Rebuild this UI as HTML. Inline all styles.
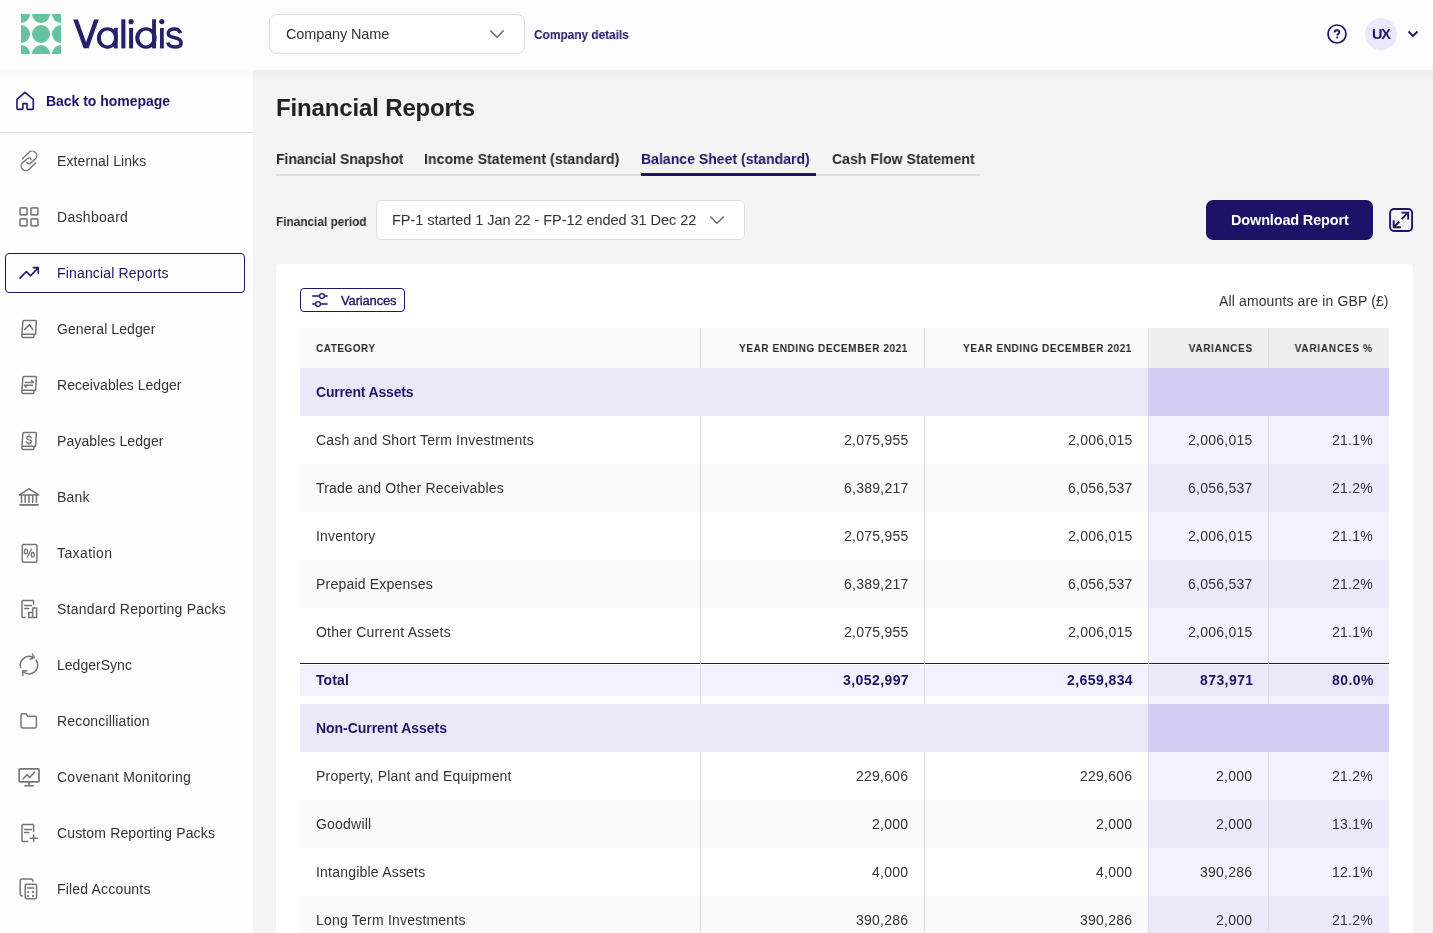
<!DOCTYPE html>
<html><head><meta charset="utf-8"><title>Financial Reports</title>
<style>
html,body{margin:0;padding:0;}
body{width:1433px;height:933px;position:relative;overflow:hidden;background:#f4f4f4;font-family:"Liberation Sans",sans-serif;}
.t{position:absolute;white-space:nowrap;will-change:transform;}
svg{display:block}
</style></head><body>
<div style="position:absolute;left:0;top:0;width:1433px;height:70px;background:#fcfcfc"></div>
<div style="position:absolute;left:0;top:70px;width:253px;height:863px;background:#fefefe"></div>
<div style="position:absolute;left:253px;top:70px;width:1180px;height:863px;background:#f4f4f4"></div>
<div style="position:absolute;left:0;top:70px;width:1433px;height:12px;background:linear-gradient(rgba(0,0,0,0.022),rgba(0,0,0,0))"></div>
<svg style="position:absolute;left:0;top:0" width="80" height="70"><defs><clipPath id="lc"><rect x="21" y="14" width="40" height="40"/></clipPath></defs><g clip-path="url(#lc)" fill="#66c3a2"><circle cx="21" cy="14" r="9"/><circle cx="21" cy="34" r="9"/><circle cx="21" cy="54" r="9"/><circle cx="41" cy="14" r="9"/><circle cx="41" cy="34" r="9"/><circle cx="41" cy="54" r="9"/><circle cx="61" cy="14" r="9"/><circle cx="61" cy="34" r="9"/><circle cx="61" cy="54" r="9"/></g></svg>
<svg style="position:absolute;left:0;top:0" width="200" height="70"><g fill="#27216b"><path d="M73.2 19.4 H77.9 L86.1 42.2 L94.1 19.4 H98.8 L88.6 48.3 H83.6 Z"/><path fill-rule="evenodd" d="M96.90 37.98 A10.55 10.8 0 1 0 118.00 37.98 A10.55 10.8 0 1 0 96.90 37.98 Z M100.90 37.9 A6.55 7.5 0 1 0 114.00 37.9 A6.55 7.5 0 1 0 100.90 37.9 Z"/><rect x="114" y="27.9" width="3.7" height="20.5"/><rect x="121.3" y="19.3" width="4.1" height="29.1"/><circle cx="131.1" cy="21.7" r="2.65"/><rect x="129.1" y="27.9" width="4" height="20.5"/><path fill-rule="evenodd" d="M135.30 37.98 A10.7 10.8 0 1 0 156.70 37.98 A10.7 10.8 0 1 0 135.30 37.98 Z M139.40 37.9 A6.6 7.5 0 1 0 152.60 37.9 A6.6 7.5 0 1 0 139.40 37.9 Z"/><rect x="152.1" y="19.3" width="3.9" height="29.1"/><circle cx="161.8" cy="21.6" r="2.6"/><rect x="160" y="28" width="3.8" height="20.4"/></g><path d="M180.6 33.2 C179.6 30.6 177.4 29.1 174.4 29.1 C171 29.1 168.3 30.8 168.3 33.4 C168.3 36.2 171.4 37 174.8 37.7 C178.5 38.5 181.1 39.7 181.1 42.9 C181.1 45.6 178.4 47 174.6 47 C170.9 47 168.6 45.3 167.7 42.5" fill="none" stroke="#27216b" stroke-width="3.5"/></svg>
<div style="position:absolute;left:269px;top:14px;width:254px;height:37.5px;border:1px solid #dedede;border-radius:8px;background:#fff"></div>
<div class="t" style="top:24.56px;font-size:14.5px;line-height:19px;color:#333333;letter-spacing:-0.133px;left:285.50px;">Company Name</div>
<svg style="position:absolute;left:486px;top:26px" width="22" height="16"><path d="M4.3 4.5 L11 11.3 L17.7 4.5" fill="none" stroke="#666" stroke-width="1.5"/></svg>
<div class="t" style="top:26.23px;font-size:13px;line-height:17px;color:#1f1566;font-weight:bold;letter-spacing:-0.070px;left:533.60px;transform:scaleX(0.92);transform-origin:left center;">Company details</div>
<svg style="position:absolute;left:1325px;top:22px" width="24" height="24"><circle cx="12" cy="12" r="9" fill="none" stroke="#1f1566" stroke-width="1.7"/><path d="M9.7 10.5 C9.7 9 10.7 8.2 12 8.2 C13.4 8.2 14.3 9.1 14.3 10.3 C14.3 11.9 12.2 12 12.2 13.6" fill="none" stroke="#1f1566" stroke-width="1.9"/><circle cx="12.2" cy="15.5" r="1.05" fill="#1f1566"/></svg>
<div style="position:absolute;left:1365px;top:18px;width:32px;height:32px;border-radius:50%;background:#ebe8fa"></div>
<div class="t" style="top:24.76px;font-size:14.5px;line-height:19px;color:#1f1566;font-weight:bold;letter-spacing:-1.142px;left:1371.50px;">UX</div>
<svg style="position:absolute;left:1404px;top:26px" width="18" height="16"><path d="M4.5 5.5 L9 10 L13.5 5.5" fill="none" stroke="#1f1566" stroke-width="1.8"/></svg>
<svg style="position:absolute;left:0;top:80px" width="45" height="40"><path d="M17 19.4 L25 12.3 L33.3 19.4 V28.4 Q33.3 29.4 32.3 29.4 H28 Q27 29.4 27 28.4 V23.6 H22.9 V28.4 Q22.9 29.4 21.9 29.4 H18 Q17 29.4 17 28.4 Z" fill="none" stroke="#1f1566" stroke-width="1.6" stroke-linejoin="round" transform="translate(0,0)"/></svg>
<div class="t" style="top:92.45px;font-size:14px;line-height:18px;color:#1f1566;font-weight:bold;letter-spacing:-0.032px;left:46.00px;">Back to homepage</div>
<div style="position:absolute;left:0;top:132px;width:253px;height:1px;background:#dddddd"></div>
<div style="position:absolute;left:5px;top:253px;width:238px;height:38px;border:1px solid #1f1566;border-radius:4px"></div>
<div class="t" style="top:152.25px;font-size:14px;line-height:18px;color:#333333;letter-spacing:0.098px;left:57.40px;">External Links</div>
<div class="t" style="top:208.25px;font-size:14px;line-height:18px;color:#333333;letter-spacing:0.301px;left:57.40px;">Dashboard</div>
<div class="t" style="top:264.25px;font-size:14px;line-height:18px;color:#1f1566;letter-spacing:0.167px;left:57.40px;">Financial Reports</div>
<div class="t" style="top:320.25px;font-size:14px;line-height:18px;color:#333333;letter-spacing:0.078px;left:57.40px;">General Ledger</div>
<div class="t" style="top:376.25px;font-size:14px;line-height:18px;color:#333333;letter-spacing:0.045px;left:57.40px;">Receivables Ledger</div>
<div class="t" style="top:432.25px;font-size:14px;line-height:18px;color:#333333;letter-spacing:0.102px;left:57.40px;">Payables Ledger</div>
<div class="t" style="top:488.25px;font-size:14px;line-height:18px;color:#333333;letter-spacing:0.197px;left:57.40px;">Bank</div>
<div class="t" style="top:544.25px;font-size:14px;line-height:18px;color:#333333;letter-spacing:0.408px;left:57.40px;">Taxation</div>
<div class="t" style="top:600.25px;font-size:14px;line-height:18px;color:#333333;letter-spacing:0.234px;left:57.40px;">Standard Reporting Packs</div>
<div class="t" style="top:656.25px;font-size:14px;line-height:18px;color:#333333;letter-spacing:0.020px;left:57.40px;">LedgerSync</div>
<div class="t" style="top:712.25px;font-size:14px;line-height:18px;color:#333333;letter-spacing:0.160px;left:57.40px;">Reconcilliation</div>
<div class="t" style="top:768.25px;font-size:14px;line-height:18px;color:#333333;letter-spacing:0.262px;left:57.40px;">Covenant Monitoring</div>
<div class="t" style="top:824.25px;font-size:14px;line-height:18px;color:#333333;letter-spacing:0.146px;left:57.40px;">Custom Reporting Packs</div>
<div class="t" style="top:880.25px;font-size:14px;line-height:18px;color:#333333;letter-spacing:0.181px;left:57.40px;">Filed Accounts</div>
<svg style="position:absolute;left:15px;top:146px" width="28" height="30" fill="none" stroke="#767676" stroke-width="1.4" stroke-linecap="round" stroke-linejoin="round"><path d="M7.36 12.73 L14.05 6.35 A4.6 4.6 0 0 1 20.55 12.85 L15.4 17.2 A2.05 2.05 0 0 1 11.85 16.2"/><g transform="rotate(180 13.98 14.87)"><path d="M7.36 12.73 L14.05 6.35 A4.6 4.6 0 0 1 20.55 12.85 L15.4 17.2 A2.05 2.05 0 0 1 11.85 16.2"/></g></svg>
<svg style="position:absolute;left:15px;top:202px" width="28" height="30" fill="none" stroke="#808080" stroke-width="1.7" stroke-linecap="round" stroke-linejoin="round"><rect x="5.05" y="5.95" width="7" height="6.9" rx="0.8"/><rect x="15.95" y="5.95" width="7" height="6.9" rx="0.8"/><rect x="5.05" y="16.95" width="7" height="6.9" rx="0.8"/><rect x="15.95" y="16.95" width="7" height="6.9" rx="0.8"/></svg>
<svg style="position:absolute;left:15px;top:258px" width="28" height="30" fill="none" stroke="#1f1566" stroke-width="1.6" stroke-linecap="round" stroke-linejoin="round"><path d="M5.1 20.1 L11.4 13.5 L15.6 17.8 L23.3 9.6 M18.3 9.6 H23.3 V15.3"/></svg>
<svg style="position:absolute;left:15px;top:314px" width="28" height="30" fill="none" stroke="#767676" stroke-width="1.5" stroke-linecap="round" stroke-linejoin="round"><path d="M9 6.4 H20.4 Q21.4 6.4 21.3 7.4 L20.6 20.3 H6.9 L7.9 7.4 Q8 6.4 9 6.4 Z M6.9 20.3 V22.5 Q6.9 23.5 7.9 23.5 H18.6 L19 20.3"/><path d="M9.6 15.4 L14.6 10.6 L17.8 15.6"/></svg>
<svg style="position:absolute;left:15px;top:370px" width="28" height="30" fill="none" stroke="#767676" stroke-width="1.5" stroke-linecap="round" stroke-linejoin="round"><path d="M9 6.4 H20.4 Q21.4 6.4 21.3 7.4 L20.6 20.3 H6.9 L7.9 7.4 Q8 6.4 9 6.4 Z M6.9 20.3 V22.5 Q6.9 23.5 7.9 23.5 H18.6 L19 20.3"/><path d="M10.3 12.4 H18.6 L16.4 10.4 M17.5 15.3 H9.3 L11.4 17.2"/></svg>
<svg style="position:absolute;left:15px;top:426px" width="28" height="30" fill="none" stroke="#767676" stroke-width="1.5" stroke-linecap="round" stroke-linejoin="round"><path d="M9 6.4 H20.4 Q21.4 6.4 21.3 7.4 L20.6 20.3 H6.9 L7.9 7.4 Q8 6.4 9 6.4 Z M6.9 20.3 V22.5 Q6.9 23.5 7.9 23.5 H18.6 L19 20.3"/><path d="M16.5 11.7 C16.1 10.9 15.2 10.5 14.1 10.5 C12.6 10.5 11.7 11.2 11.7 12.2 C11.7 13.4 12.9 13.7 14.1 13.9 C15.5 14.1 16.5 14.6 16.5 15.7 C16.5 16.7 15.5 17.2 14 17.2 C12.7 17.2 11.8 16.8 11.4 16 M14.1 9.3 V10.5 M14 17.2 V18.3" stroke-width="1.4"/></svg>
<svg style="position:absolute;left:15px;top:482px" width="28" height="30" fill="none" stroke="#767676" stroke-width="1.5" stroke-linecap="round" stroke-linejoin="round"><path d="M4.3 12.9 L14 6.8 L23.7 12.9 Z M6.5 13 V20.4 M10.2 13 V20.4 M14 13 V20.4 M17.7 13 V20.4 M21.4 13 V20.4"/><path d="M4.3 22.9 H23.7" stroke-width="1.8" stroke-linecap="butt"/></svg>
<svg style="position:absolute;left:15px;top:538px" width="28" height="30" fill="none" stroke="#767676" stroke-width="1.5" stroke-linecap="round" stroke-linejoin="round"><rect x="7.3" y="6.5" width="14.6" height="17.7" rx="1.2"/><ellipse cx="10.9" cy="13.4" rx="1.55" ry="2.3" stroke-width="1.3"/><ellipse cx="17.75" cy="16.8" rx="1.55" ry="2.3" stroke-width="1.3"/><path d="M16.4 11.1 L12.3 19.1" stroke-width="1.3"/></svg>
<svg style="position:absolute;left:15px;top:594px" width="28" height="30" fill="none" stroke="#767676" stroke-width="1.5" stroke-linecap="round" stroke-linejoin="round"><path d="M18.6 10.3 V7.6 Q18.6 6.6 17.6 6.6 H8 Q7 6.6 7 7.6 V22.4 Q7 23.4 8 23.4 H10.3 M9.6 11.5 H16.4 M9.6 14.5 H13.7"/><path d="M13.8 18.4 H17.6 V23.4 H13.8 Z M17.6 14 H21.6 V23.4 H17.6 Z"/></svg>
<svg style="position:absolute;left:15px;top:650px" width="28" height="30" fill="none" stroke="#767676" stroke-width="1.5" stroke-linecap="round" stroke-linejoin="round"><path d="M5.64 17.5 A8.7 8.7 0 0 1 18.3 7.6 M17.4 4.1 L19.2 7.5 L15.2 9.2 M21.21 10.24 A8.7 8.7 0 0 1 8.4 21.8 M11.9 20.7 L7.6 21 L7.8 25.5"/></svg>
<svg style="position:absolute;left:15px;top:706px" width="28" height="30" fill="none" stroke="#767676" stroke-width="1.5" stroke-linecap="round" stroke-linejoin="round"><path d="M7.5 7.8 H11 L12.7 10.2 H20 Q21.4 10.2 21.4 11.6 V20.5 Q21.4 21.9 20 21.9 H7.4 Q6 21.9 6 20.5 V9.3 Q6 7.8 7.5 7.8 Z"/></svg>
<svg style="position:absolute;left:15px;top:762px" width="28" height="30" fill="none" stroke="#767676" stroke-width="1.5" stroke-linecap="round" stroke-linejoin="round"><rect x="4.2" y="6.8" width="19.8" height="13" rx="0.8" stroke-width="1.7"/><path d="M8.2 16.6 L12.2 12.6 L14.6 15.4 L19.7 10.1"/><path d="M14 20.6 V23.6 M9.4 23.8 H18.8" stroke-width="1.6" stroke-linecap="butt"/></svg>
<svg style="position:absolute;left:15px;top:818px" width="28" height="30" fill="none" stroke="#767676" stroke-width="1.5" stroke-linecap="round" stroke-linejoin="round"><path d="M18.6 13.2 V7.6 Q18.6 6.6 17.6 6.6 H8 Q7 6.6 7 7.6 V22.4 Q7 23.4 8 23.4 H12.7 M9.6 11.5 H16.4 M9.6 14.5 H13.7 M18.7 17 V23.6 M15.2 20.3 H22.5"/></svg>
<svg style="position:absolute;left:15px;top:874px" width="28" height="30" fill="none" stroke="#767676" stroke-width="1.5" stroke-linecap="round" stroke-linejoin="round"><path d="M18 7.2 Q18 4.9 15.8 4.9 H7.3 Q5.2 4.9 5.2 7 V19.8 Q5.2 22 7.3 22"/><rect x="10.2" y="10.2" width="11.4" height="14.6" rx="1.5"/><path d="M12.7 14 H18.6" stroke-width="1.7"/><path d="M12.9 18 h0.4 M17.8 18 h0.4 M12.9 22 h0.4 M17.8 22 h0.4" stroke-width="1.8"/></svg>
<div class="t" style="top:91.53px;font-size:24px;line-height:31px;color:#222;font-weight:bold;letter-spacing:-0.148px;left:276.40px;">Financial Reports</div>
<div style="position:absolute;left:276px;top:174px;width:704px;height:2px;background:#dcdcdc"></div>
<div style="position:absolute;left:641px;top:173px;width:175px;height:3px;background:#1f1566"></div>
<div class="t" style="top:148.77px;font-size:15px;line-height:20px;color:#2a2a2a;font-weight:bold;letter-spacing:-0.091px;left:276.40px;transform:scaleX(0.937);transform-origin:left center;">Financial Snapshot</div>
<div class="t" style="top:148.77px;font-size:15px;line-height:20px;color:#2a2a2a;font-weight:bold;letter-spacing:0.071px;left:424.00px;transform:scaleX(0.937);transform-origin:left center;">Income Statement (standard)</div>
<div class="t" style="top:148.77px;font-size:15px;line-height:20px;color:#1f1566;font-weight:bold;left:641.20px;transform:scaleX(0.937);transform-origin:left center;">Balance Sheet (standard)</div>
<div class="t" style="top:148.77px;font-size:15px;line-height:20px;color:#2a2a2a;font-weight:bold;letter-spacing:0.034px;left:832.10px;transform:scaleX(0.937);transform-origin:left center;">Cash Flow Statement</div>
<div class="t" style="top:212.63px;font-size:13px;line-height:17px;color:#2a2a2a;font-weight:bold;letter-spacing:-0.008px;left:276.40px;transform:scaleX(0.91);transform-origin:left center;">Financial period</div>
<div style="position:absolute;left:376px;top:200px;width:367px;height:38px;border:1px solid #dedede;border-radius:6px;background:#fff"></div>
<div class="t" style="top:210.76px;font-size:14.5px;line-height:19px;color:#333333;letter-spacing:-0.045px;left:391.90px;">FP-1 started 1 Jan 22 - FP-12 ended 31 Dec 22</div>
<svg style="position:absolute;left:706px;top:212px" width="22" height="16"><path d="M4.3 4.5 L11 11.3 L17.7 4.5" fill="none" stroke="#6a6a6a" stroke-width="1.4"/></svg>
<div style="position:absolute;left:1206px;top:200px;width:167px;height:40px;border-radius:7px;background:#1d1266"></div>
<div class="t" style="top:210.76px;font-size:14.5px;line-height:19px;color:#fff;font-weight:bold;letter-spacing:-0.159px;left:1230.80px;">Download Report</div>
<svg style="position:absolute;left:1385px;top:204px" width="32" height="32" fill="none" stroke="#1f1566" stroke-width="1.9"><rect x="5.1" y="5" width="22" height="22" rx="4"/><path d="M16.7 15.1 L22 9.7 M16.5 8.6 H23.2 V15.5 M14.3 17.7 L9.8 22 M8.7 16.2 V23.2 H15.8"/></svg>
<div style="position:absolute;left:276px;top:264px;width:1137px;height:700px;background:#fff;border-radius:4px"></div>
<div style="position:absolute;left:300px;top:288px;width:103px;height:22px;border:1px solid #1f1566;border-radius:4px"></div>
<svg style="position:absolute;left:306px;top:288px" width="30" height="24" fill="none" stroke="#1f1566" stroke-width="1.3"><path d="M6.2 8 H13.6 M18.4 8 H21.7 M6.2 16 H9.6 M14.4 16 H21.7"/><circle cx="16" cy="8" r="2.4"/><circle cx="12" cy="16" r="2.4"/></svg>
<div class="t" style="top:292.23px;font-size:13px;line-height:17px;color:#1f1566;letter-spacing:-0.155px;left:340.70px;-webkit-text-stroke:0.35px #1f1566;">Variances</div>
<div class="t" style="top:291.55px;font-size:14px;line-height:18px;color:#333333;letter-spacing:0.130px;right:44.87px;">All amounts are in GBP (£)</div>
<div style="position:absolute;left:300px;top:328px;width:848px;height:40px;background:#f9f9f9"></div>
<div style="position:absolute;left:1148px;top:328px;width:241px;height:40px;background:#efefef"></div>
<div style="position:absolute;left:300px;top:368px;width:848px;height:48px;background:#ebe8f9"></div>
<div style="position:absolute;left:1148px;top:368px;width:241px;height:48px;background:#d4cef5"></div>
<div style="position:absolute;left:300px;top:416px;width:848px;height:48px;background:#ffffff"></div>
<div style="position:absolute;left:1148px;top:416px;width:241px;height:48px;background:#f3f1fd"></div>
<div style="position:absolute;left:300px;top:464px;width:848px;height:48px;background:#f9f9f9"></div>
<div style="position:absolute;left:1148px;top:464px;width:241px;height:48px;background:#ebe8f9"></div>
<div style="position:absolute;left:300px;top:512px;width:848px;height:48px;background:#ffffff"></div>
<div style="position:absolute;left:1148px;top:512px;width:241px;height:48px;background:#f3f1fd"></div>
<div style="position:absolute;left:300px;top:560px;width:848px;height:48px;background:#f9f9f9"></div>
<div style="position:absolute;left:1148px;top:560px;width:241px;height:48px;background:#ebe8f9"></div>
<div style="position:absolute;left:300px;top:608px;width:848px;height:54px;background:#ffffff"></div>
<div style="position:absolute;left:1148px;top:608px;width:241px;height:54px;background:#f3f1fd"></div>
<div style="position:absolute;left:1148px;top:656px;width:241px;height:9px;background:#f3f1fd"></div>
<div style="position:absolute;left:300px;top:663px;width:1089px;height:1.25px;background:#1f1566"></div>
<div style="position:absolute;left:300px;top:665px;width:848px;height:31px;background:#f3f1fd"></div>
<div style="position:absolute;left:1148px;top:665px;width:241px;height:31px;background:#ebe8f9"></div>
<div style="position:absolute;left:1148px;top:696px;width:241px;height:8px;background:#f3f1fd"></div>
<div style="position:absolute;left:300px;top:704px;width:848px;height:48px;background:#ebe8f9"></div>
<div style="position:absolute;left:1148px;top:704px;width:241px;height:48px;background:#d4cef5"></div>
<div style="position:absolute;left:300px;top:752px;width:848px;height:48px;background:#ffffff"></div>
<div style="position:absolute;left:1148px;top:752px;width:241px;height:48px;background:#f3f1fd"></div>
<div style="position:absolute;left:300px;top:800px;width:848px;height:48px;background:#f9f9f9"></div>
<div style="position:absolute;left:1148px;top:800px;width:241px;height:48px;background:#ebe8f9"></div>
<div style="position:absolute;left:300px;top:848px;width:848px;height:48px;background:#ffffff"></div>
<div style="position:absolute;left:1148px;top:848px;width:241px;height:48px;background:#f3f1fd"></div>
<div style="position:absolute;left:300px;top:896px;width:848px;height:48px;background:#f9f9f9"></div>
<div style="position:absolute;left:1148px;top:896px;width:241px;height:48px;background:#ebe8f9"></div>
<div style="position:absolute;left:700px;top:328px;width:1px;height:40px;background:#dcdcdc"></div>
<div style="position:absolute;left:700px;top:416px;width:1px;height:288px;background:#dcdcdc"></div>
<div style="position:absolute;left:700px;top:752px;width:1px;height:181px;background:#dcdcdc"></div>
<div style="position:absolute;left:924px;top:328px;width:1px;height:40px;background:#dcdcdc"></div>
<div style="position:absolute;left:924px;top:416px;width:1px;height:288px;background:#dcdcdc"></div>
<div style="position:absolute;left:924px;top:752px;width:1px;height:181px;background:#dcdcdc"></div>
<div style="position:absolute;left:1148px;top:328px;width:1px;height:40px;background:#dcdcdc"></div>
<div style="position:absolute;left:1148px;top:416px;width:1px;height:288px;background:#dcdcdc"></div>
<div style="position:absolute;left:1148px;top:752px;width:1px;height:181px;background:#dcdcdc"></div>
<div style="position:absolute;left:1268px;top:328px;width:1px;height:40px;background:#dcdcdc"></div>
<div style="position:absolute;left:1268px;top:416px;width:1px;height:288px;background:#dcdcdc"></div>
<div style="position:absolute;left:1268px;top:752px;width:1px;height:181px;background:#dcdcdc"></div>
<div class="t" style="top:341.11px;font-size:11.5px;line-height:15px;color:#2a2a2a;font-weight:bold;letter-spacing:0.451px;left:316.20px;transform:scaleX(0.88);transform-origin:left center;">CATEGORY</div>
<div class="t" style="top:341.11px;font-size:11.5px;line-height:15px;color:#2a2a2a;font-weight:bold;letter-spacing:0.566px;right:524.80px;transform:scaleX(0.88);transform-origin:right center;">YEAR ENDING DECEMBER 2021</div>
<div class="t" style="top:341.11px;font-size:11.5px;line-height:15px;color:#2a2a2a;font-weight:bold;letter-spacing:0.566px;right:300.80px;transform:scaleX(0.88);transform-origin:right center;">YEAR ENDING DECEMBER 2021</div>
<div class="t" style="top:341.11px;font-size:11.5px;line-height:15px;color:#2a2a2a;font-weight:bold;letter-spacing:0.646px;right:179.83px;transform:scaleX(0.88);transform-origin:right center;">VARIANCES</div>
<div class="t" style="top:341.11px;font-size:11.5px;line-height:15px;color:#2a2a2a;font-weight:bold;letter-spacing:0.777px;right:59.82px;transform:scaleX(0.88);transform-origin:right center;">VARIANCES %</div>
<div class="t" style="top:383.35px;font-size:14px;line-height:18px;color:#1f1566;font-weight:bold;letter-spacing:-0.173px;left:316.20px;">Current Assets</div>
<div class="t" style="top:719.35px;font-size:14px;line-height:18px;color:#1f1566;font-weight:bold;letter-spacing:-0.042px;left:316.20px;">Non-Current Assets</div>
<div class="t" style="top:431.25px;font-size:14px;line-height:18px;color:#333333;letter-spacing:0.210px;left:316.30px;">Cash and Short Term Investments</div>
<div class="t" style="top:431.25px;font-size:14px;line-height:18px;color:#333333;letter-spacing:0.250px;right:524.25px;">2,075,955</div>
<div class="t" style="top:431.25px;font-size:14px;line-height:18px;color:#333333;letter-spacing:0.250px;right:300.25px;">2,006,015</div>
<div class="t" style="top:431.25px;font-size:14px;line-height:18px;color:#333333;letter-spacing:0.250px;right:180.25px;">2,006,015</div>
<div class="t" style="top:431.25px;font-size:14px;line-height:18px;color:#333333;letter-spacing:0.250px;right:60.05px;">21.1%</div>
<div class="t" style="top:479.25px;font-size:14px;line-height:18px;color:#333333;letter-spacing:0.210px;left:316.30px;">Trade and Other Receivables</div>
<div class="t" style="top:479.25px;font-size:14px;line-height:18px;color:#333333;letter-spacing:0.250px;right:524.25px;">6,389,217</div>
<div class="t" style="top:479.25px;font-size:14px;line-height:18px;color:#333333;letter-spacing:0.250px;right:300.25px;">6,056,537</div>
<div class="t" style="top:479.25px;font-size:14px;line-height:18px;color:#333333;letter-spacing:0.250px;right:180.25px;">6,056,537</div>
<div class="t" style="top:479.25px;font-size:14px;line-height:18px;color:#333333;letter-spacing:0.250px;right:60.05px;">21.2%</div>
<div class="t" style="top:527.25px;font-size:14px;line-height:18px;color:#333333;letter-spacing:0.210px;left:316.30px;">Inventory</div>
<div class="t" style="top:527.25px;font-size:14px;line-height:18px;color:#333333;letter-spacing:0.250px;right:524.25px;">2,075,955</div>
<div class="t" style="top:527.25px;font-size:14px;line-height:18px;color:#333333;letter-spacing:0.250px;right:300.25px;">2,006,015</div>
<div class="t" style="top:527.25px;font-size:14px;line-height:18px;color:#333333;letter-spacing:0.250px;right:180.25px;">2,006,015</div>
<div class="t" style="top:527.25px;font-size:14px;line-height:18px;color:#333333;letter-spacing:0.250px;right:60.05px;">21.1%</div>
<div class="t" style="top:575.25px;font-size:14px;line-height:18px;color:#333333;letter-spacing:0.210px;left:316.30px;">Prepaid Expenses</div>
<div class="t" style="top:575.25px;font-size:14px;line-height:18px;color:#333333;letter-spacing:0.250px;right:524.25px;">6,389,217</div>
<div class="t" style="top:575.25px;font-size:14px;line-height:18px;color:#333333;letter-spacing:0.250px;right:300.25px;">6,056,537</div>
<div class="t" style="top:575.25px;font-size:14px;line-height:18px;color:#333333;letter-spacing:0.250px;right:180.25px;">6,056,537</div>
<div class="t" style="top:575.25px;font-size:14px;line-height:18px;color:#333333;letter-spacing:0.250px;right:60.05px;">21.2%</div>
<div class="t" style="top:623.25px;font-size:14px;line-height:18px;color:#333333;letter-spacing:0.210px;left:316.30px;">Other Current Assets</div>
<div class="t" style="top:623.25px;font-size:14px;line-height:18px;color:#333333;letter-spacing:0.250px;right:524.25px;">2,075,955</div>
<div class="t" style="top:623.25px;font-size:14px;line-height:18px;color:#333333;letter-spacing:0.250px;right:300.25px;">2,006,015</div>
<div class="t" style="top:623.25px;font-size:14px;line-height:18px;color:#333333;letter-spacing:0.250px;right:180.25px;">2,006,015</div>
<div class="t" style="top:623.25px;font-size:14px;line-height:18px;color:#333333;letter-spacing:0.250px;right:60.05px;">21.1%</div>
<div class="t" style="top:767.25px;font-size:14px;line-height:18px;color:#333333;letter-spacing:0.210px;left:316.30px;">Property, Plant and Equipment</div>
<div class="t" style="top:767.25px;font-size:14px;line-height:18px;color:#333333;letter-spacing:0.250px;right:524.25px;">229,606</div>
<div class="t" style="top:767.25px;font-size:14px;line-height:18px;color:#333333;letter-spacing:0.250px;right:300.25px;">229,606</div>
<div class="t" style="top:767.25px;font-size:14px;line-height:18px;color:#333333;letter-spacing:0.250px;right:180.25px;">2,000</div>
<div class="t" style="top:767.25px;font-size:14px;line-height:18px;color:#333333;letter-spacing:0.250px;right:60.05px;">21.2%</div>
<div class="t" style="top:815.25px;font-size:14px;line-height:18px;color:#333333;letter-spacing:0.210px;left:316.30px;">Goodwill</div>
<div class="t" style="top:815.25px;font-size:14px;line-height:18px;color:#333333;letter-spacing:0.250px;right:524.25px;">2,000</div>
<div class="t" style="top:815.25px;font-size:14px;line-height:18px;color:#333333;letter-spacing:0.250px;right:300.25px;">2,000</div>
<div class="t" style="top:815.25px;font-size:14px;line-height:18px;color:#333333;letter-spacing:0.250px;right:180.25px;">2,000</div>
<div class="t" style="top:815.25px;font-size:14px;line-height:18px;color:#333333;letter-spacing:0.250px;right:60.05px;">13.1%</div>
<div class="t" style="top:863.25px;font-size:14px;line-height:18px;color:#333333;letter-spacing:0.210px;left:316.30px;">Intangible Assets</div>
<div class="t" style="top:863.25px;font-size:14px;line-height:18px;color:#333333;letter-spacing:0.250px;right:524.25px;">4,000</div>
<div class="t" style="top:863.25px;font-size:14px;line-height:18px;color:#333333;letter-spacing:0.250px;right:300.25px;">4,000</div>
<div class="t" style="top:863.25px;font-size:14px;line-height:18px;color:#333333;letter-spacing:0.250px;right:180.25px;">390,286</div>
<div class="t" style="top:863.25px;font-size:14px;line-height:18px;color:#333333;letter-spacing:0.250px;right:60.05px;">12.1%</div>
<div class="t" style="top:911.25px;font-size:14px;line-height:18px;color:#333333;letter-spacing:0.210px;left:316.30px;">Long Term Investments</div>
<div class="t" style="top:911.25px;font-size:14px;line-height:18px;color:#333333;letter-spacing:0.250px;right:524.25px;">390,286</div>
<div class="t" style="top:911.25px;font-size:14px;line-height:18px;color:#333333;letter-spacing:0.250px;right:300.25px;">390,286</div>
<div class="t" style="top:911.25px;font-size:14px;line-height:18px;color:#333333;letter-spacing:0.250px;right:180.25px;">2,000</div>
<div class="t" style="top:911.25px;font-size:14px;line-height:18px;color:#333333;letter-spacing:0.250px;right:60.05px;">21.2%</div>
<div class="t" style="top:671.25px;font-size:14px;line-height:18px;color:#1f1566;font-weight:bold;letter-spacing:0.100px;left:316.20px;">Total</div>
<div class="t" style="top:671.25px;font-size:14px;line-height:18px;color:#1f1566;font-weight:bold;letter-spacing:0.420px;right:523.88px;">3,052,997</div>
<div class="t" style="top:671.25px;font-size:14px;line-height:18px;color:#1f1566;font-weight:bold;letter-spacing:0.420px;right:299.88px;">2,659,834</div>
<div class="t" style="top:671.25px;font-size:14px;line-height:18px;color:#1f1566;font-weight:bold;letter-spacing:0.420px;right:179.88px;">873,971</div>
<div class="t" style="top:671.25px;font-size:14px;line-height:18px;color:#1f1566;font-weight:bold;letter-spacing:0.420px;right:59.58px;">80.0%</div>
</body></html>
